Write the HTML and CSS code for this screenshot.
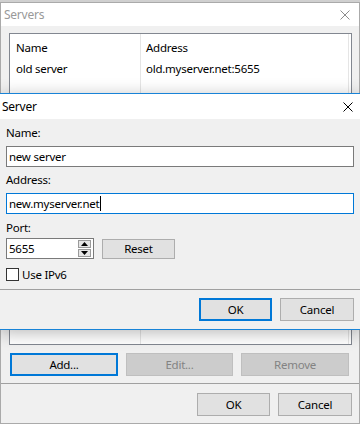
FILE: index.html
```html
<!DOCTYPE html>
<html>
<head>
<meta charset="utf-8">
<link rel="stylesheet" href="styles.css">
</head>
<body>
<div class="screen">
  <div class="strip"></div>
  <div class="win">
    <div class="tbar">
      <span class="ttl inactive">Servers</span>
      <svg class="xicon" width="10" height="10" viewBox="0 0 10 10"><path d="M0.5 0.5L9.5 9.5M9.5 0.5L0.5 9.5" stroke="#8c8c8c" stroke-width="1" fill="none"/></svg>
    </div>
    <div class="wbody">
      <div class="list">
        <div class="cell c1 head">Name</div>
        <div class="cell c2 head">Address</div>
        <div class="cell c3 head"></div>
        <div class="cell c1">old server</div>
        <div class="cell c2">old.myserver.net:5655</div>
        <div class="cell c3"></div>
        <div class="cell c1"></div>
        <div class="cell c2"></div>
        <div class="cell c3"></div>
      </div>
      <div class="btn3">
        <div class="btn focus">Add...</div>
        <div class="btn dis">Edit...</div>
        <div class="btn dis">Remove</div>
      </div>
      <div class="sep"></div>
      <div class="foot back-foot">
        <div class="btn ok">OK</div>
        <div class="btn cancel">Cancel</div>
      </div>
    </div>
  </div>

  <div class="dialog">
    <div class="tbar dtbar">
      <span class="ttl">Server</span>
      <svg class="xicon" width="10" height="10" viewBox="0 0 10 10"><path d="M0.5 0.5L9.5 9.5M9.5 0.5L0.5 9.5" stroke="#000" stroke-width="1" fill="none"/></svg>
    </div>
    <div class="dbody">
      <div class="lbl">Name:</div>
      <div class="inp">new server</div>
      <div class="lbl">Address:</div>
      <div class="inp active">new.myserver.net<span class="caret"></span></div>
      <div class="lbl port-lbl">Port:</div>
      <div class="portrow">
        <div class="spin">
          <span class="spinval">5655</span>
          <div class="arrows">
            <div class="arr"><svg width="7" height="4" viewBox="0 0 7 4"><path d="M3.5 0L7 4H0Z" fill="#000"/></svg></div>
            <div class="arr"><svg width="7" height="4" viewBox="0 0 7 4"><path d="M0 0H7L3.5 4Z" fill="#000"/></svg></div>
          </div>
        </div>
        <div class="btn reset">Reset</div>
      </div>
      <div class="chkrow">
        <span class="chk"></span>
        <span class="chklbl">Use IPv6</span>
      </div>
    </div>
    <div class="sep dsep"></div>
    <div class="foot dfoot">
      <div class="btn ok focus">OK</div>
      <div class="btn cancel">Cancel</div>
    </div>
  </div>
</div>
</body>
</html>
```
FILE: styles.css
```css
* { box-sizing: border-box; }
html, body { margin: 0; padding: 0; }
body {
  width: 360px;
  height: 424px;
  overflow: hidden;
  font-family: "Noto Sans", "Open Sans", sans-serif;
  font-size: 11.5px;
  letter-spacing: -0.25px;
  color: #000;
  background: #f0f0f0;
}
.screen { position: relative; width: 360px; height: 424px; overflow: hidden; }
.strip { height: 2px; background: #d0d0d0; }

.win {
  width: 360px;
  height: 422px;
  border: 1px solid #aaaaaa;
  background: #f0f0f0;
  display: flex;
  flex-direction: column;
}
.tbar {
  height: 23px;
  background: #fff;
  display: flex;
  align-items: center;
  justify-content: space-between;
  padding: 0 9px 0 3px;
  flex: none;
}
.ttl { line-height: 16px; font-size: 12px; }
.ttl.inactive { color: #999; }
.xicon { display: block; }

.wbody {
  flex: 1;
  display: flex;
  flex-direction: column;
  padding: 7px 7px 7px 8px;
}
.list {
  height: 312px;
  border: 1px solid #828790;
  background: #fff;
  display: grid;
  grid-template-columns: 131px 208px 1fr;
  grid-template-rows: 27px 16px 1fr;
}
.cell { padding-left: 6px; line-height: 16px; white-space: nowrap; }
.cell.c1, .cell.c2 { border-right: 1px solid #e5e5e5; }
.cell.head { padding-top: 6px; }
.cell.c2 { padding-left: 5px; }

.btn3 {
  margin-top: 8px;
  display: grid;
  grid-template-columns: 108px 107px 108px;
  column-gap: 8px;
  padding-left: 1px;
}
.btn {
  height: 23px;
  border: 1px solid #adadad;
  background: #e1e1e1;
  display: flex;
  align-items: center;
  justify-content: center;
  line-height: 16px;
}
.btn.focus { border: 2px solid #0078d7; }
.btn.dis { background: #cccccc; border-color: #bfbfbf; color: #838383; }

.sep { height: 1px; background: #a0a0a0; margin-top: 7px; }
.wbody .sep { margin-left: -8px; margin-right: -7px; }

.foot {
  display: flex;
  justify-content: flex-end;
  gap: 8px;
}
.back-foot { padding-top: 9px; }
.btn.ok { width: 73px; }
.btn.cancel { width: 74px; }

.dialog {
  position: absolute;
  left: -1px;
  top: 93px;
  width: 362px;
  height: 237px;
  border: 1px solid #1883d7;
  background: #f0f0f0;
  box-shadow: 0 3px 16px rgba(0, 0, 0, 0.28);
}
.dtbar { height: 25px; padding: 0 7px 0 2px; }
.dbody { padding: 6px 6px 0 6px; }
.lbl { line-height: 16px; margin-bottom: 5px; }
.port-lbl { margin-bottom: 2px; }
.inp {
  height: 21px;
  border: 1px solid #7a7a7a;
  background: #fff;
  padding-left: 2px;
  line-height: 19px;
  margin-bottom: 5px;
  white-space: nowrap;
  display: flex;
  align-items: center;
}
.inp.active { border-color: #0078d7; margin-bottom: 6px; }
.caret { display: inline-block; width: 1px; height: 15px; background: #000; margin-left: 1px; }

.portrow { display: flex; align-items: center; gap: 8px; }
.spin {
  width: 88px;
  height: 21px;
  border: 1px solid #7a7a7a;
  background: #fff;
  display: flex;
  align-items: center;
  justify-content: space-between;
  padding: 0 2px 0 2px;
}
.spinval { line-height: 16px; }
.arrows { display: flex; flex-direction: column; gap: 1px; }
.arr {
  width: 13px;
  height: 8px;
  background: #e5e5e5;
  border: 1px solid #9a9a9a;
  display: flex;
  align-items: center;
  justify-content: center;
}
.arr svg { display: block; }
.btn.reset { width: 73px; height: 20px; }

.chkrow { margin-top: 9px; display: flex; align-items: center; height: 13px; }
.chk { width: 13px; height: 13px; border: 1px solid #333; background: #fff; flex: none; }
.chklbl { margin-left: 3px; line-height: 16px; }

.dsep { margin-top: 8px; }
.dfoot { padding: 8px 6px 0 6px; }
.dfoot .btn { height: 23px; }
```
